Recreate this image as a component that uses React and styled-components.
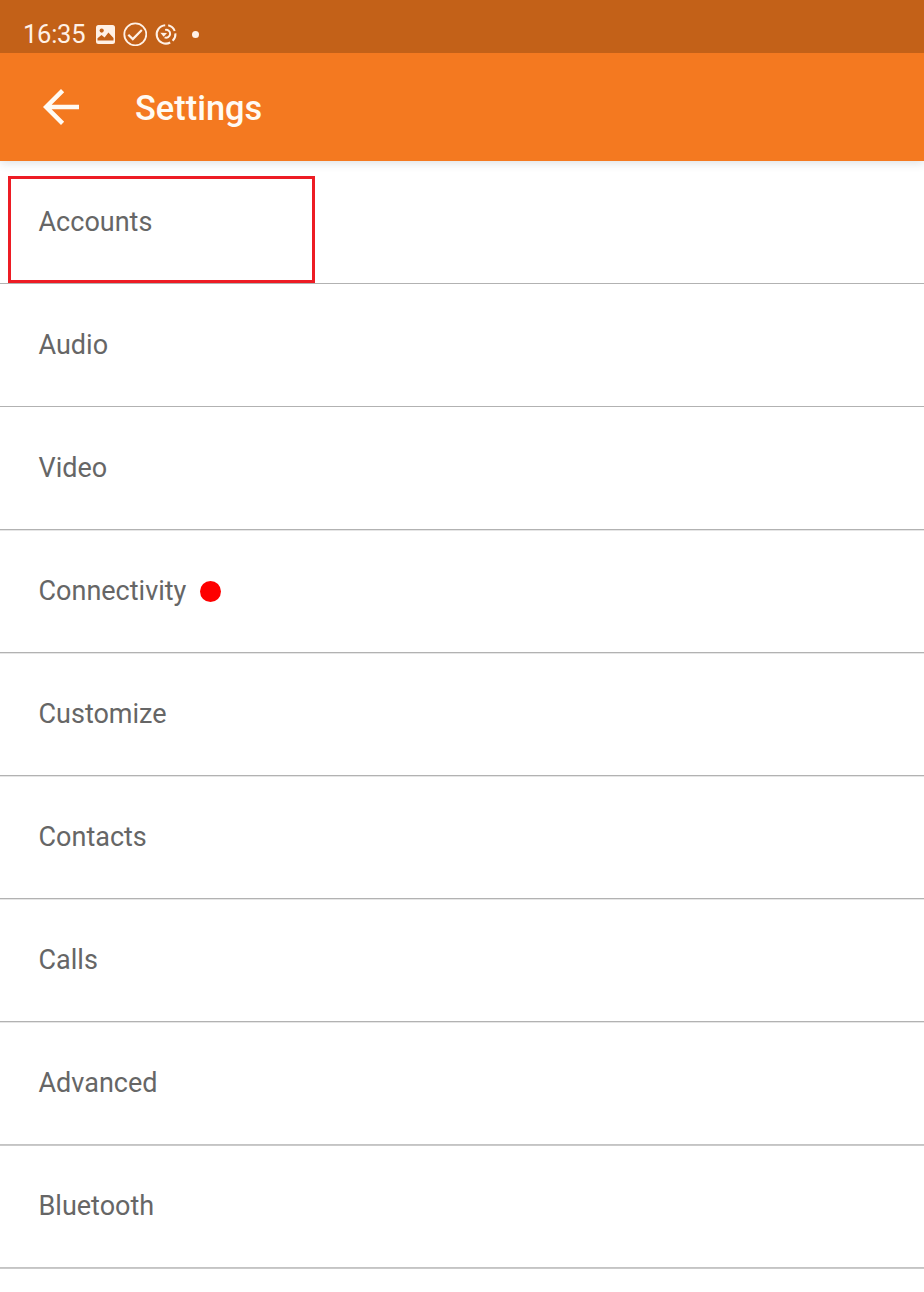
import styled, { createGlobalStyle } from "styled-components";

const GlobalStyle = createGlobalStyle`
  * {
    box-sizing: border-box;
  }
  body {
    margin: 0;
    background-color: #fff;
    font-family: Roboto, sans-serif;
  }
`;

const Screen = styled.div`
  height: 1292px;
  overflow: hidden;
  background-color: #fff;
`;

const StatusBar = styled.div`
  position: relative;
  z-index: 1;
  display: flex;
  align-items: center;
  height: 53px;
  padding: 15px 0 0 23px;
  background-color: #c36118;
  color: #fff1e6;
`;

const Clock = styled.span`
  width: 70px;
  font-size: 25.5px;
  line-height: 30px;
  letter-spacing: -0.25px;
`;

const StatusIcon = styled.svg`
  flex: none;
  width: 24px;
  height: 24px;
  margin-right: ${(props) => props.$gap || 0}px;
`;

const StatusDot = styled.span`
  width: 7px;
  height: 7px;
  background-color: currentColor;
  border-radius: 50%;
`;

const Header = styled.header`
  position: relative;
  display: flex;
  align-items: center;
  height: 108px;
  padding-left: 43px;
  background-color: #f47920;
  color: #fffaf3;
  box-shadow: 0 2px 9px rgba(40, 60, 80, 0.16);
`;

const BackButton = styled.button`
  display: flex;
  width: 36px;
  height: 36px;
  margin: 0 56px 0 0;
  padding: 0;
  border: 0;
  background-color: transparent;
  color: inherit;
  cursor: pointer;
`;

const Title = styled.h1`
  margin: 2px 0 0;
  font-size: 34.4px;
  font-weight: 500;
  line-height: 44px;
`;

const SettingsList = styled.ul`
  margin: 0;
  padding: 0;
  list-style-type: none;
`;

const SettingsItem = styled.li`
  position: relative;
  display: flex;
  align-items: center;
  height: 123px;
  padding: 0 38.5px;
  border-bottom: 1px solid #b2b2b2;
  color: #666;
  font-size: 27px;
  cursor: pointer;
  &:nth-child(n + 3) {
    box-shadow: 0 1px 0 #e6e6e6;
  }
  &:nth-child(n + 8) {
    border-bottom-color: #c4c4c4;
    box-shadow: 0 1px 0 #cacaca;
  }
`;

const Highlight = styled.span`
  position: absolute;
  top: 15px;
  left: 8px;
  width: 307px;
  height: 107px;
  border: 3px solid #ed1c24;
`;

const AlertDot = styled.span`
  width: 21px;
  height: 21px;
  margin-left: 13.6px;
  border-radius: 50%;
  background-color: #fe0000;
`;

const items = [
  { name: "Accounts", highlighted: true },
  { name: "Audio" },
  { name: "Video" },
  { name: "Connectivity", alert: true },
  { name: "Customize" },
  { name: "Contacts" },
  { name: "Calls" },
  { name: "Advanced" },
  { name: "Bluetooth" },
];

const PictureIcon = () => (
  <StatusIcon viewBox="0 0 24 24" $gap={6}>
    <rect x="3" y="3" width="19" height="19" rx="2.5" fill="currentColor" />
    <circle cx="8.7" cy="8.6" r="2.1" fill="#c36118" />
    <path
      d="M4.5 18.5 V16.3 L8.5 13 L11.6 15.6 L15.4 10.5 L20.5 16 V18.5 Z"
      fill="#c36118"
    />
  </StatusIcon>
);

const CheckIcon = () => (
  <StatusIcon viewBox="0 0 24 24" $gap={6.5} fill="none" stroke="currentColor">
    <circle cx="12.3" cy="12.3" r="11" strokeWidth="1.8" />
    <path d="M5.3 12.7 L9.8 17.1 L18.8 8" strokeWidth="2.2" />
  </StatusIcon>
);

const SyncIcon = () => (
  <StatusIcon
    viewBox="0 0 24 24"
    $gap={14.5}
    fill="none"
    stroke="currentColor"
    strokeWidth="2"
  >
    <path d="M11.2 3.2 A9.2 9.2 0 1 0 16.2 20.5" />
    <path d="M14.2 3.2 A9.2 9.2 0 0 1 20.7 9" />
    <path d="M21.4 11.4 A9.2 9.2 0 0 1 18.6 18.8" />
    <path d="M11.2 8 A3.9 3.9 0 1 1 10.6 15.3" />
    <path d="M6.3 10.8 L13 11 L9.7 14.8 Z" fill="currentColor" stroke="none" />
  </StatusIcon>
);

const App = () => {
  return (
    <Screen>
      <GlobalStyle />
      <StatusBar>
        <Clock>16:35</Clock>
        <PictureIcon />
        <CheckIcon />
        <SyncIcon />
        <StatusDot />
      </StatusBar>
      <Header>
        <BackButton aria-label="Back">
          <svg width="36" height="36" viewBox="4 4 16 16" fill="currentColor">
            <path d="M20 11H7.83l5.59-5.59L12 4l-8 8 8 8 1.41-1.41L7.83 13H20v-2z" />
          </svg>
        </BackButton>
        <Title>Settings</Title>
      </Header>
      <SettingsList>
        {items.map((item) => (
          <SettingsItem key={item.name}>
            {item.highlighted && <Highlight />}
            {item.name}
            {item.alert && <AlertDot />}
          </SettingsItem>
        ))}
      </SettingsList>
    </Screen>
  );
};

export default App;
